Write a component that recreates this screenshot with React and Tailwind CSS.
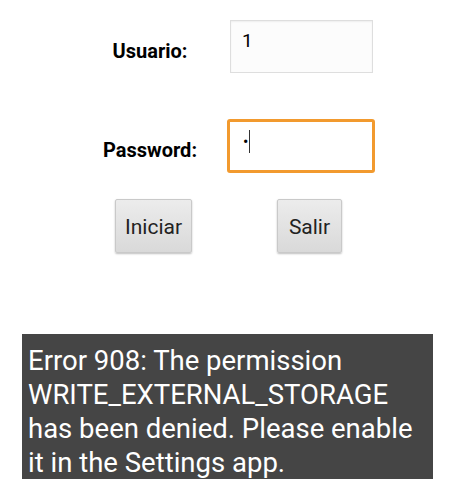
import { useState } from 'react';

const App = () => {
  const [usuario, setUsuario] = useState('1');
  const [password, setPassword] = useState('1');

  return (
    <div className="w-[474px] h-[479px] overflow-hidden bg-white font-['Roboto',sans-serif] relative">
      <div className="pt-[20px] pl-[90px]">
        <div className="flex items-center h-[53px]">
          <label className="w-[120px] text-center text-[20px] font-bold text-black mt-[8px]">Usuario:</label>
          <div className="ml-[20px] w-[143px] h-[53px] border border-[#dedede] bg-[#fcfcfc] shadow-[inset_0_1px_2px_rgba(0,0,0,0.06)] pl-[11px] pt-[8px] text-[19px] text-black leading-[24px]">
            {usuario}
          </div>
        </div>

        <div className="flex items-center h-[54px] mt-[46px]">
          <label className="w-[120px] text-center text-[20px] font-bold text-black mt-[8px]">Password:</label>
          <div className="ml-[17px] w-[148px] h-[54px] border-[3px] border-[#f29a2e] rounded-[3px] bg-white pl-[13px] pt-[6px] flex items-start">
            <span className="text-[16px] leading-[28px] text-black">•</span>
            <span className="ml-[1px] mt-[2px] w-[1px] h-[23px] bg-[#333]" />
          </div>
        </div>

        <div className="flex mt-[26px]">
          <button className="ml-[25px] w-[77px] h-[54px] pt-[4px] rounded-[2px] border border-[#c9c9c9] bg-gradient-to-b from-[#ececec] to-[#d9d9d9] shadow-[0_1px_2px_rgba(0,0,0,0.25)] text-[21px] text-[#222]">
            Iniciar
          </button>
          <button className="ml-[85px] w-[65px] h-[54px] pt-[4px] rounded-[2px] border border-[#c9c9c9] bg-gradient-to-b from-[#ececec] to-[#d9d9d9] shadow-[0_1px_2px_rgba(0,0,0,0.25)] text-[21px] text-[#222]">
            Salir
          </button>
        </div>
      </div>

      <div className="mt-[81px] ml-[22px] w-[411px] h-[160px] bg-[#454545] pl-[6px] pr-[6px] pt-[10px] text-white text-[27.5px] leading-[34px]">
        Error 908: The permission WRITE_EXTERNAL_STORAGE has been denied. Please enable it in the Settings app.
      </div>
    </div>
  );
};

export default App;
